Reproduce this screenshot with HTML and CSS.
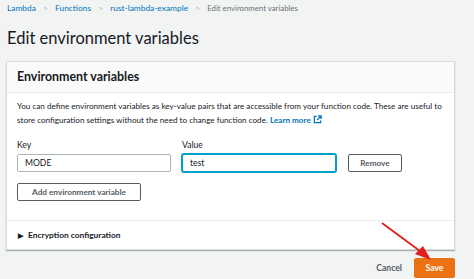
FILE: index.html
```html
<!DOCTYPE html>
<html lang="en">
<head>
    <meta charset="UTF-8">
    <title>Edit environment variables</title>
    <link rel="stylesheet" href="styles.css">
</head>
<body>
    <div class="page">
        <nav class="crumbs">
            <a href="#">Lambda</a>
            <span class="sep">&gt;</span>
            <a href="#">Functions</a>
            <span class="sep">&gt;</span>
            <a href="#">rust-lambda-example</a>
            <span class="sep">&gt;</span>
            <span class="current">Edit environment variables</span>
        </nav>

        <h1>Edit environment variables</h1>

        <div class="panel">
            <div class="panel-head">Environment variables</div>
            <div class="panel-body">
                <p class="desc">You can define environment variables as key-value pairs that are accessible from your function code. These are useful to store configuration settings without the need to change function code. <a href="#">Learn more</a> <svg class="ext" viewBox="0 0 10 10" width="9" height="9"><path d="M4 1.5H1.5v7h7V6" fill="none" stroke="#0073bb" stroke-width="1.4"/><path d="M5.5 1h3.5v3.5M9 1 4.5 5.5" fill="none" stroke="#0073bb" stroke-width="1.4"/></svg></p>

                <div class="row labels">
                    <label class="col" for="key">Key</label>
                    <label class="col" for="value">Value</label>
                </div>
                <div class="row">
                    <input class="col field" id="key" type="text" value="MODE">
                    <input class="col field focus" id="value" type="text" value="test">
                    <button type="button" class="btn">Remove</button>
                </div>
                <button type="button" class="btn add">Add environment variable</button>
            </div>
            <div class="panel-foot">
                <span class="caret">&#9654;</span> Encryption configuration
            </div>
        </div>

        <div class="actions">
            <a href="#" class="cancel">Cancel</a>
            <button type="button" class="save">Save</button>
        </div>
    </div>

    <svg class="arrow" width="474" height="279" viewBox="0 0 474 279">
        <line x1="382" y1="223" x2="424" y2="254" stroke="#e0201b" stroke-width="1.8"/>
        <polygon points="431,260 415,254 423,246" fill="#e0201b"/>
    </svg>
</body>
</html>
```

FILE: styles.css
```css
body {
    margin: 0;
    padding: 0;
    background: #f2f3f3;
    font-family: Lato, Arial, sans-serif;
    color: #16191f;
    overflow: hidden;
}
.page {
    padding: 2px 19px 0 6px;
}
.crumbs {
    font-size: 8.4px;
    height: 13px;
    line-height: 13px;
    padding-left: 1px;
    color: #687078;
    white-space: nowrap;
}
.crumbs a {
    color: #0073bb;
    text-decoration: none;
}
.crumbs .sep {
    color: #aab7b8;
    margin: 0 5px;
}
.crumbs .current {
    font-size: 7.8px;
}
h1 {
    font-size: 16.5px;
    font-weight: 400;
    margin: 12px 0 12px 1px;
    line-height: 22px;
}
.panel {
    background: #fff;
    border: 1px solid #d5dbdb;
    box-shadow: 0 1px 1px rgba(0, 28, 36, 0.3);
}
.panel-head {
    background: #fafafa;
    border-bottom: 1px solid #eaeded;
    height: 30px;
    line-height: 30px;
    padding-left: 10px;
    font-size: 12.4px;
    font-weight: 700;
}
.panel-body {
    padding: 6px 5px 19px 10px;
    border-bottom: 1px solid #eaeded;
}
.desc {
    font-size: 8.15px;
    line-height: 14px;
    margin: 0 0 11px 0;
}
.desc a {
    color: #0073bb;
    font-weight: 700;
    text-decoration: none;
}
.ext {
    vertical-align: -1px;
}
.row {
    display: flex;
    gap: 11px;
    align-items: center;
}
.labels {
    font-size: 8.6px;
    height: 14px;
    margin-bottom: 2px;
}
.col {
    width: 154px;
}
.field {
    box-sizing: border-box;
    height: 18px;
    border: 1px solid #aab7b8;
    border-radius: 2px;
    padding: 0 7px;
    font-family: inherit;
    font-size: 8.6px;
    color: #16191f;
    outline: none;
}
.field.focus {
    border-color: #00a1c9;
    box-shadow: 0 0 0 1px #00a1c9;
}
.btn {
    box-sizing: border-box;
    height: 18px;
    padding: 0 10px;
    background: #fff;
    border: 1px solid #545b64;
    border-radius: 2px;
    font-family: inherit;
    font-size: 8.2px;
    font-weight: 700;
    color: #545b64;
    line-height: 16px;
    white-space: nowrap;
}
.row .btn {
    width: 54px;
    margin-left: 1px;
    padding: 0;
}
.add {
    margin-top: 11px;
    width: 124px;
    padding: 0;
}
.panel-foot {
    height: 28px;
    line-height: 28px;
    padding-left: 11px;
    font-size: 8.4px;
    font-weight: 700;
}
.caret {
    font-size: 7px;
    margin-right: 3px;
    color: #16191f;
}
.actions {
    display: flex;
    justify-content: flex-end;
    align-items: center;
    gap: 12px;
    margin-top: 8px;
}
.cancel {
    color: #545b64;
    font-size: 8.6px;
    font-weight: 700;
    text-decoration: none;
}
.save {
    width: 41px;
    height: 20px;
    background: #ec7211;
    border: 1px solid #ec7211;
    border-radius: 2px;
    color: #fff;
    font-family: inherit;
    font-size: 8.6px;
    font-weight: 700;
    padding: 0;
}
.arrow {
    position: absolute;
    left: 0;
    top: 0;
    pointer-events: none;
}
```
